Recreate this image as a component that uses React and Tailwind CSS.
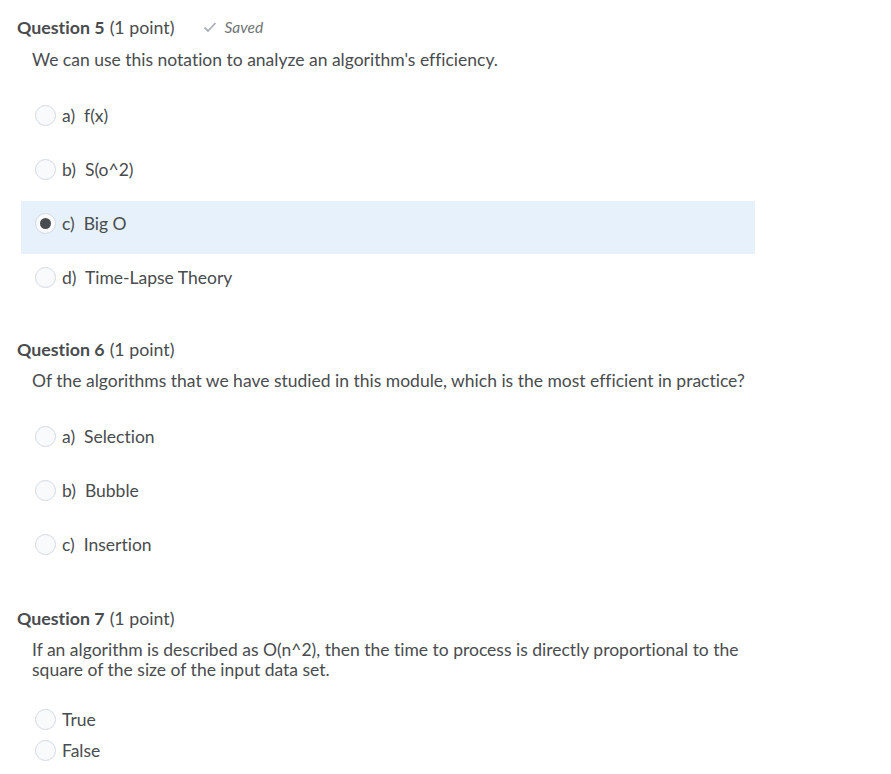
const QUESTIONS = [
  {
    num: 5,
    saved: true,
    text: "We can use this notation to analyze an algorithm's efficiency.",
    options: ["a)\u00a0 f(x)", "b)\u00a0 S(o^2)", "c)\u00a0 Big O", "d)\u00a0 Time-Lapse Theory"],
    selected: 2,
  },
  {
    num: 6,
    text: "Of the algorithms that we have studied in this module, which is the most efficient in practice?",
    options: ["a)\u00a0 Selection", "b)\u00a0 Bubble", "c)\u00a0 Insertion"],
  },
];

function Radio({ checked }) {
  return (
    <span className="flex h-[21px] w-[21px] shrink-0 items-center justify-center rounded-full border border-[#d3d9e3] bg-[#f9fafb]">
      {checked && <span className="h-[11px] w-[11px] rounded-full bg-[#494c4e]" />}
    </span>
  );
}

function Header({ num, saved }) {
  return (
    <div className="flex h-[24px] items-center text-[17.8px] leading-[24px]">
      <span className="font-bold">Question {num}</span>
      <span className="ml-[5px]">(1 point)</span>
      {saved && (
        <span className="ml-[29px] flex items-center text-[15.5px] italic text-[#6e7376]">
          <svg width="14" height="12" viewBox="0 0 14 12" className="mr-[7px]">
            <path d="M1.5 6.5 L5 10 L12.5 2" fill="none" stroke="#a9b0b8" strokeWidth="1.8" />
          </svg>
          Saved
        </span>
      )}
    </div>
  );
}

export default function App() {
  return (
    <div
      className="min-h-[774px] bg-white pl-[17px] text-[#494c4e] [font-variant-ligatures:none]"
      style={{ fontFamily: "Lato, 'Open Sans', sans-serif" }}
    >
      {QUESTIONS.map((q, qi) => (
        <div key={q.num} className={qi === 0 ? "pt-[15px]" : "pt-[29px]"}>
          <Header num={q.num} saved={q.saved} />
          <p className={`ml-[15px] text-[17.5px] leading-[20px] ${qi === 0 ? "mt-[11px]" : "mt-[10px]"}`}>{q.text}</p>
          <div className="mt-[23px] flex flex-col gap-[1px]">
            {q.options.map((opt, i) => (
              <label
                key={opt}
                className={`ml-[4px] flex h-[53px] w-[734px] items-start pl-[14px] pt-[12px] text-[17.5px] ${
                  q.selected === i ? "bg-[#e7f1fb]" : ""
                }`}
              >
                <span className="flex h-[21px] items-center gap-[6px]">
                  <Radio checked={q.selected === i} />
                  <span className="leading-[21px]">{opt}</span>
                </span>
              </label>
            ))}
          </div>
        </div>
      ))}
      <div className="pt-[31px]">
        <Header num={7} />
        <p className="ml-[15px] mt-[10px] w-[723px] text-[17.5px] leading-[20px]">
          If an algorithm is described as O(n^2), then the time to process is directly proportional to the square of the size of the input data set.
        </p>
        <div className="mt-[24px] flex flex-col pl-[18px]">
          {["True", "False"].map((opt) => (
            <label key={opt} className="flex h-[31px] items-center gap-[6px] text-[17.5px]">
              <Radio />
              <span className="leading-[21px]">{opt}</span>
            </label>
          ))}
        </div>
      </div>
    </div>
  );
}
